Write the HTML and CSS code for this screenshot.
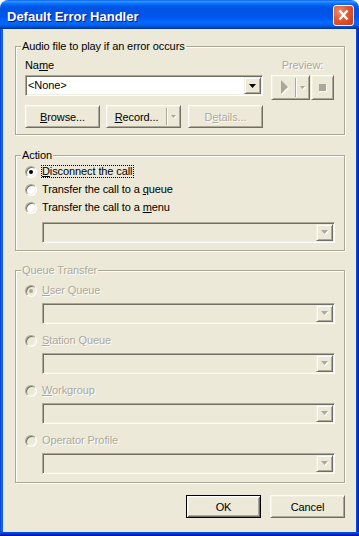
FILE: index.html
```html
<!DOCTYPE html>
<html>
<head>
<meta charset="utf-8">
<link rel="stylesheet" href="styles.css">
</head>
<body>
<div class="window">
  <div class="titlebar">
    <span class="title">Default Error Handler</span>
    <span class="close"><svg width="19" height="19" viewBox="0 0 19 19"><path d="M5.5 4.5 L13.5 13.5 M13.5 4.5 L5.5 13.5" stroke="#fff" stroke-width="2.4" fill="none"/></svg></span>
  </div>
  <div class="frame">
    <div class="edge-l"></div>
    <div class="client">
      <div class="group g-audio">
        <span class="legend">Audio file to play if an error occurs</span>
        <div class="audio-grid">
          <div class="col-left">
            <div class="label">Na<u>m</u>e</div>
            <div class="combo">
              <span class="combo-text">&lt;None&gt;</span>
              <span class="drop"><svg width="7" height="4" viewBox="0 0 7 4"><polygon points="0,0 7,0 3.5,4" fill="#000"/></svg></span>
            </div>
            <div class="btn-row">
              <button class="btn"><u>B</u>rowse...</button>
              <button class="btn rec">
                <span class="rec-text"><u>R</u>ecord...</span>
                <span class="sep"></span>
                <span class="rec-arrow"><svg width="6" height="4" viewBox="0 0 6 4"><polygon points="1,1 6,1 3.5,4" fill="#fff"/><polygon points="0,0 5,0 2.5,3" fill="#aca899"/></svg></span>
              </button>
              <button class="btn dis">D<u>e</u>tails...</button>
            </div>
          </div>
          <div class="col-right">
            <div class="label dis center">Preview:</div>
            <div class="media">
              <span class="btn play">
                <span class="play-icon"><svg width="9" height="16" viewBox="0 0 9 16"><polygon points="1,1 8,8 1,15" fill="#fff"/><polygon points="0,0 7,7 0,14" fill="#aca899"/></svg></span>
                <span class="sep"></span>
                <span class="play-arrow"><svg width="6" height="4" viewBox="0 0 6 4"><polygon points="1,1 6,1 3.5,4" fill="#fff"/><polygon points="0,0 5,0 2.5,3" fill="#aca899"/></svg></span>
              </span>
              <span class="btn stop"><span class="stop-icon"></span></span>
            </div>
          </div>
        </div>
      </div>

      <div class="group g-action">
        <span class="legend">Action</span>
        <div class="rrow"><span class="radio on"><span class="dot"></span></span><span class="rlabel focus"><u>D</u>isconnect the call</span></div>
        <div class="rrow"><span class="radio"></span><span class="rlabel">Transfer the call to a <u>q</u>ueue</span></div>
        <div class="rrow"><span class="radio"></span><span class="rlabel">Transfer the call to a <u>m</u>enu</span></div>
        <div class="combo off sub">
          <span class="combo-text"></span>
          <span class="drop"><svg width="8" height="5" viewBox="0 0 8 5"><polygon points="1,1 8,1 4.5,5" fill="#fff"/><polygon points="0,0 7,0 3.5,4" fill="#aca899"/></svg></span>
        </div>
      </div>

      <div class="group g-queue">
        <span class="legend dis">Queue Transfer</span>
        <div class="rrow"><span class="radio off on"><span class="dot"></span></span><span class="rlabel dis"><u>U</u>ser Queue</span></div>
        <div class="combo off sub q">
          <span class="combo-text"></span>
          <span class="drop"><svg width="8" height="5" viewBox="0 0 8 5"><polygon points="1,1 8,1 4.5,5" fill="#fff"/><polygon points="0,0 7,0 3.5,4" fill="#aca899"/></svg></span>
        </div>
        <div class="rrow qr"><span class="radio off"></span><span class="rlabel dis"><u>S</u>tation Queue</span></div>
        <div class="combo off sub q">
          <span class="combo-text"></span>
          <span class="drop"><svg width="8" height="5" viewBox="0 0 8 5"><polygon points="1,1 8,1 4.5,5" fill="#fff"/><polygon points="0,0 7,0 3.5,4" fill="#aca899"/></svg></span>
        </div>
        <div class="rrow qr"><span class="radio off"></span><span class="rlabel dis"><u>W</u>orkgroup</span></div>
        <div class="combo off sub q">
          <span class="combo-text"></span>
          <span class="drop"><svg width="8" height="5" viewBox="0 0 8 5"><polygon points="1,1 8,1 4.5,5" fill="#fff"/><polygon points="0,0 7,0 3.5,4" fill="#aca899"/></svg></span>
        </div>
        <div class="rrow qr"><span class="radio off"></span><span class="rlabel dis">Operator Profile</span></div>
        <div class="combo off sub q">
          <span class="combo-text"></span>
          <span class="drop"><svg width="8" height="5" viewBox="0 0 8 5"><polygon points="1,1 8,1 4.5,5" fill="#fff"/><polygon points="0,0 7,0 3.5,4" fill="#aca899"/></svg></span>
        </div>
      </div>

      <div class="actions">
        <button class="btn default">OK</button>
        <button class="btn">Cancel</button>
      </div>
    </div>
    <div class="edge-r"></div>
  </div>
  <div class="edge-b"></div>
</div>
</body>
</html>
```

FILE: styles.css
```css
html, body {
  margin: 0;
  padding: 0;
  background: #ffffff;
}

.window {
  width: 359px;
  height: 536px;
  display: flex;
  flex-direction: column;
  border-radius: 8px 8px 0 0;
  overflow: hidden;
  font-family: "Liberation Sans", Arial, sans-serif;
  font-size: 11px;
  letter-spacing: -0.1px;
  color: #000;
}

.titlebar {
  height: 29px;
  box-sizing: border-box;
  display: flex;
  align-items: flex-start;
  justify-content: space-between;
  padding: 5px 5px 0 7px;
  background: linear-gradient(to bottom,
    #0058ee 0%, #3593ff 4%, #288eff 7%, #127dff 10%, #036ffc 14%,
    #0262ee 18%, #0057e5 24%, #0054e3 30%, #0055eb 56%, #005bf5 66%,
    #026afe 76%, #0062ef 86%, #0052d6 92%, #0040ab 96%, #003092 100%);
}

.title {
  margin-top: 4px;
  font-weight: bold;
  font-size: 13px;
  line-height: 15px;
  letter-spacing: 0;
  color: #fff;
  text-shadow: 1px 1px 0 #0a1883;
}

.close {
  width: 21px;
  height: 21px;
  box-sizing: border-box;
  border: 1px solid #fff;
  border-radius: 3px;
  background: radial-gradient(circle at 30% 30%, #f08c6c 0%, #e2572f 45%, #c8381a 100%);
  display: flex;
  align-items: center;
  justify-content: center;
}

.frame {
  flex: 1;
  display: flex;
}

.edge-l {
  width: 3px;
  background: linear-gradient(to right, #0831d9, #166aee 50%, #0855dd);
}

.edge-r {
  width: 3px;
  background: linear-gradient(to right, #0855dd, #0831d9 50%, #001ea0);
}

.edge-b {
  height: 4px;
  background: linear-gradient(to bottom, #0855dd, #0831d9 50%, #00138c);
}

.client {
  flex: 1;
  background: #ece9d8;
  display: flex;
  flex-direction: column;
  padding: 17px 11px 0 12px;
}

/* group boxes */
.group {
  position: relative;
  box-sizing: border-box;
  width: 330px;
  border: 1px solid #aca899;
  box-shadow: inset 1px 1px 0 #fff, 1px 1px 0 #fff;
}

.legend {
  position: absolute;
  top: -7px;
  left: 5px;
  padding: 0 1px;
  line-height: 13px;
  background: #ece9d8;
  white-space: nowrap;
}

.g-audio {
  padding: 12px 10px 6px 9px;
}

.g-action {
  margin-top: 20px;
  padding: 9px 9px 7px 9px;
}

.g-queue {
  margin-top: 19px;
  padding: 13px 9px 8px 9px;
}

.dis {
  color: #aca899;
  text-shadow: 1px 1px 0 #fff;
}

u {
  text-decoration: underline;
  text-underline-offset: 1px;
}

.audio-grid {
  display: grid;
  grid-template-columns: 238px 63px;
  column-gap: 8px;
}

.label {
  line-height: 13px;
  height: 13px;
  white-space: nowrap;
}

.center {
  text-align: center;
}

/* combo box */
.combo {
  display: flex;
  height: 21px;
  box-sizing: border-box;
  margin-top: 3px;
  padding: 1px;
  border: 1px solid;
  border-color: #aca899 #fff #fff #aca899;
  box-shadow: inset 1px 1px 0 #716f64, inset -1px -1px 0 #f1efe2;
  background: #fff;
}

.combo.off {
  background: #ece9d8;
}

.combo.sub {
  width: 293px;
  margin-left: 17px;
  margin-top: 8px;
}

.combo.q {
  margin-top: 6px;
}

.combo-text {
  flex: 1;
  padding-left: 1px;
  line-height: 17px;
  white-space: nowrap;
}

.drop {
  width: 17px;
  box-sizing: border-box;
  border: 1px solid;
  border-color: #f1efe2 #716f64 #716f64 #f1efe2;
  box-shadow: inset 1px 1px 0 #fff, inset -1px -1px 0 #aca899;
  background: #ece9d8;
  display: flex;
  align-items: center;
  justify-content: center;
}

.drop svg {
  display: block;
}

/* buttons */
.btn-row {
  display: flex;
  margin-top: 9px;
}

.btn-row .btn + .btn {
  margin-left: 6px;
}

.btn-row .btn.dis {
  margin-left: 7px;
}

.btn {
  font: inherit;
  letter-spacing: inherit;
  color: #000;
  margin: 0;
  padding: 0;
  width: 75px;
  height: 23px;
  box-sizing: border-box;
  background: #ece9d8;
  border: 1px solid;
  border-color: #fff #716f64 #716f64 #fff;
  box-shadow: inset 1px 1px 0 #f1efe2, inset -1px -1px 0 #aca899;
  display: flex;
  align-items: center;
  justify-content: center;
  border-radius: 0;
}

.btn.dis {
  color: #aca899;
}

.btn.default {
  border-color: #000;
  box-shadow: inset 1px 1px 0 #fff, inset -1px -1px 0 #716f64,
              inset 2px 2px 0 #f1efe2, inset -2px -2px 0 #aca899;
}

.rec {
  justify-content: flex-start;
  align-items: stretch;
}

.rec-text {
  width: 59px;
  display: flex;
  align-items: center;
  justify-content: center;
  white-space: nowrap;
}

.sep {
  width: 1px;
  margin: 2px 0;
  background: #aca899;
  border-right: 1px solid #fff;
}

.rec-arrow {
  flex: 1;
  display: flex;
  align-items: center;
  justify-content: center;
}

.rec-arrow svg, .play-arrow svg, .play-icon svg {
  display: block;
}

.media {
  display: flex;
  gap: 1px;
  margin-top: 3px;
}

.play {
  width: 39px;
  height: 25px;
  align-items: stretch;
  justify-content: flex-start;
}

.play-icon {
  width: 23px;
  display: flex;
  align-items: center;
  justify-content: center;
  padding-left: 3px;
  box-sizing: border-box;
}

.play-arrow {
  flex: 1;
  display: flex;
  align-items: center;
  justify-content: center;
}

.stop {
  width: 23px;
  height: 25px;
}

.stop-icon {
  width: 7px;
  height: 7px;
  background: #aca899;
  box-shadow: 1px 1px 0 #fff;
}

/* radios */
.rrow {
  display: flex;
  align-items: center;
  height: 13px;
  gap: 4px;
}

.rrow + .rrow {
  margin-top: 5px;
}

.rrow.qr {
  margin-top: 10px;
}

.radio {
  width: 12px;
  height: 12px;
  box-sizing: border-box;
  flex: none;
  border-radius: 50%;
  border: 1px solid;
  border-color: #aca899 #fff #fff #aca899;
  box-shadow: inset 1px 1px 0 #716f64, inset -1px -1px 0 #f1efe2;
  background: #fff;
  display: flex;
  align-items: center;
  justify-content: center;
}

.radio.off {
  background: #ece9d8;
}

.dot {
  width: 4px;
  height: 4px;
  border-radius: 50%;
  background: #000;
}

.radio.off .dot {
  background: #aca899;
}

.rlabel {
  border: 1px solid transparent;
  line-height: 11px;
  padding-right: 1px;
  white-space: nowrap;
}

.rlabel.focus {
  border: 1px dotted #000;
}

/* dialog buttons */
.actions {
  display: flex;
  justify-content: flex-end;
  gap: 9px;
  margin-top: 12px;
}
```
